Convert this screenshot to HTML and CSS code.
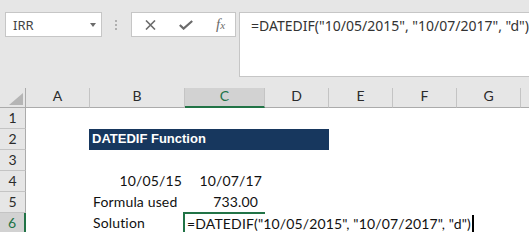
FILE: index.html
```html
<!DOCTYPE html>
<html>

<head>
    <title>DATEDIF Function</title>
    <link rel="stylesheet" href="styles.css">
</head>

<body>
    <div class="toolbar">
        <div class="namebox">
            <span>IRR</span>
            <span class="drop"></span>
        </div>
        <div class="grip"><i></i><i></i><i></i></div>
        <div class="fxbox">
            <svg width="11" height="10" viewBox="0 0 11 10">
                <path d="M1 0.5 L10 9.5 M10 0.5 L1 9.5" stroke="#6b6b6b" stroke-width="1.6" fill="none" />
            </svg>
            <svg width="14" height="10" viewBox="0 0 14 10">
                <path d="M0.8 5 L4.6 8.6 L13.2 1" stroke="#6b6b6b" stroke-width="2.2" fill="none" />
            </svg>
            <span class="fx">f<small>x</small></span>
        </div>
        <div class="formula">=DATEDIF("10/05/2015", "10/07/2017", "d")</div>
    </div>

    <div class="sheet">
        <div class="corner">
            <svg width="14" height="12" viewBox="0 0 14 12">
                <polygon points="14,0 14,12 0,12" fill="#b5b5b5" />
            </svg>
        </div>
        <div class="ch">A</div>
        <div class="ch">B</div>
        <div class="ch sel">C</div>
        <div class="ch">D</div>
        <div class="ch">E</div>
        <div class="ch">F</div>
        <div class="ch">G</div>
        <div class="ch"></div>

        <div class="rh">1</div>
        <div class="rh">2</div>
        <div class="rh">3</div>
        <div class="rh">4</div>
        <div class="rh">5</div>
        <div class="rh sel">6</div>

        <div class="title">DATEDIF Function</div>

        <div class="cell num b4">10/05/15</div>
        <div class="cell num c4">10/07/17</div>
        <div class="cell b5">Formula used</div>
        <div class="cell num c5">733.00</div>
        <div class="cell b6">Solution</div>
        <div class="cell edit">=DATEDIF("10/05/2015", "10/07/2017", "d")<span class="cursor"></span></div>
    </div>
</body>

</html>
```

FILE: styles.css
```css
body {
    margin: 0;
    font-family: Lato, "Liberation Sans", sans-serif;
    background-color: #ffffff;
    overflow: hidden;
}

/* formula bar area */

.toolbar {
    display: flex;
    align-items: flex-start;
    height: 88px;
    box-sizing: border-box;
    padding: 12px 0 0 5px;
    background-color: #e6e6e6;
}

.namebox {
    display: flex;
    align-items: center;
    justify-content: space-between;
    width: 101px;
    height: 25px;
    box-sizing: border-box;
    padding: 0 5px 0 7px;
    border: 1px solid #c6c6c6;
    background-color: #ffffff;
    font-family: "Noto Sans", sans-serif;
    font-size: 13px;
    color: #444444;
}

.drop {
    width: 0;
    height: 0;
    border-left: 3.5px solid transparent;
    border-right: 3.5px solid transparent;
    border-top: 4px solid #6b6b6b;
}

.grip {
    display: flex;
    flex-direction: column;
    align-items: center;
    gap: 2px;
    width: 31px;
    padding-top: 8px;
}

.grip i {
    width: 2px;
    height: 2px;
    background-color: #b0b0b0;
}

.fxbox {
    display: flex;
    align-items: center;
    gap: 23px;
    width: 110px;
    height: 25px;
    box-sizing: border-box;
    padding-left: 13px;
    border: 1px solid #c6c6c6;
    background-color: #ffffff;
}

.fx {
    font-family: "Liberation Serif", serif;
    font-style: italic;
    font-size: 15px;
    color: #6b6b6b;
    line-height: 1;
}

.fx small {
    font-size: 11px;
}

.formula {
    flex: 1;
    height: 65px;
    box-sizing: border-box;
    margin-left: 3px;
    padding: 3px 0 0 11px;
    border: 1px solid #c6c6c6;
    border-right: none;
    background-color: #ffffff;
    font-family: "Noto Sans", sans-serif;
    font-size: 14px;
    line-height: 19px;
    color: #333333;
    white-space: nowrap;
}

/* grid */

.sheet {
    display: grid;
    grid-template-columns: 26px 64px 95px 80px 64px 64px 64px 64px 64px;
    grid-template-rows: 20px repeat(6, 21px);
}

.corner,
.ch,
.rh {
    box-sizing: border-box;
    background-color: #e6e6e6;
    color: #2b2b2b;
    font-size: 14px;
    text-align: center;
}

.corner {
    display: flex;
    align-items: flex-end;
    justify-content: flex-end;
    padding: 0 2px 2px 0;
    border-right: 1px solid #ababab;
    border-bottom: 1px solid #ababab;
}

.ch {
    line-height: 16px;
    border-right: 1px solid #c4c4c4;
    border-bottom: 1px solid #ababab;
}

.rh {
    grid-column: 1;
    line-height: 20px;
    border-right: 1px solid #ababab;
    border-bottom: 1px solid #c4c4c4;
}

.ch.sel {
    background-color: #d2d2d2;
    color: #217346;
    border-bottom: 2px solid #217346;
}

.rh.sel {
    background-color: #d2d2d2;
    color: #217346;
    border-right: 2px solid #217346;
}

.title {
    grid-row: 3;
    grid-column: 3 / 6;
    margin-left: -1px;
    padding-left: 3px;
    background-color: #17375e;
    color: #ffffff;
    font: bold 13px/20px "Liberation Sans", Arial, sans-serif;
}

.cell {
    padding: 0 3px;
    font-size: 14px;
    line-height: 20px;
    letter-spacing: 0.15px;
    color: #111111;
    white-space: nowrap;
}

.num {
    text-align: right;
}

.b4 { grid-row: 5; grid-column: 3; }
.c4 { grid-row: 5; grid-column: 4; }
.b5 { grid-row: 6; grid-column: 3; }
.c5 { grid-row: 6; grid-column: 4; padding-right: 7px; }
.b6 { grid-row: 7; grid-column: 3; }

.edit {
    grid-row: 7;
    grid-column: 4;
    margin: -1px 0 0 -2px;
    padding-left: 2px;
    border-left: 2px solid #217346;
    border-top: 2px solid #217346;
}

.cursor {
    display: inline-block;
    width: 2px;
    height: 18px;
    margin-left: 1px;
    vertical-align: -4px;
    background-color: #000000;
}
```
